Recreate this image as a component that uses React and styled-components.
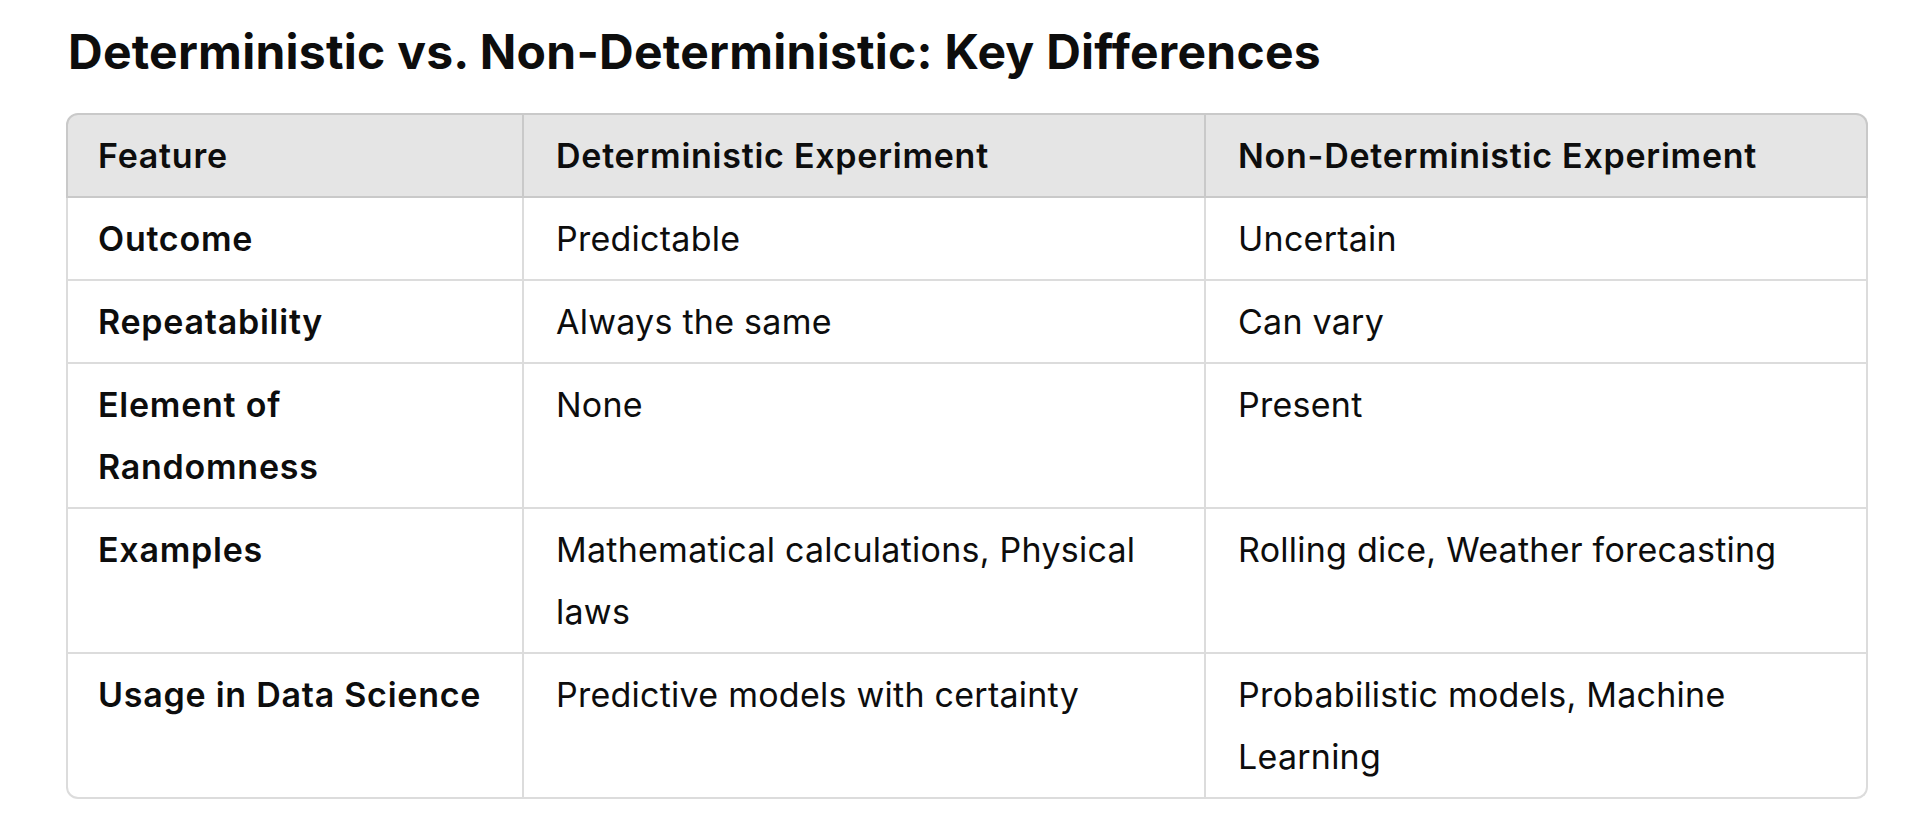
import React from "react";
import styled, { createGlobalStyle } from "styled-components";

const GlobalStyle = createGlobalStyle`
    html, body {
        margin: 0;
        padding: 0;
        background: #ffffff;
    }
    body {
        font-family: Inter, "Noto Sans", "Liberation Sans", sans-serif;
        color: #0d0d0d;
    }
`;

const Page = styled.div`
    padding: 22px 38px 30px 66px;
`;

const Heading = styled.h3`
    margin: 0 0 31px 2px;
    font-size: 48px;
    line-height: 60px;
    font-weight: 700;
    letter-spacing: 0.25px;
`;

const Table = styled.table`
    width: 1802px;
    border-collapse: separate;
    border-spacing: 0;
    table-layout: fixed;
`;

const HeadCell = styled.th`
    background: #e5e5e5;
    border-top: 2px solid #c9c9c9;
    border-right: 2px solid #c9c9c9;
    border-bottom: 2px solid #c9c9c9;
    padding: 10px 30px 9px 32px;
    text-align: left;
    font-size: 34px;
    line-height: 62px;
    font-weight: 600;
    letter-spacing: 0.75px;

    &:first-child {
        border-left: 2px solid #c9c9c9;
        border-top-left-radius: 12px;
        padding-left: 30px;
    }
    &:last-child {
        border-top-right-radius: 12px;
    }
`;

const Cell = styled.td`
    border-right: 2px solid #dcdcdc;
    border-bottom: 2px solid #dcdcdc;
    padding: 10px 30px 9px 32px;
    vertical-align: top;
    font-size: 34px;
    line-height: 62px;
    font-weight: ${(p) => (p.$label ? 600 : 400)};
    letter-spacing: ${(p) => (p.$label ? "0.75px" : "0.25px")};

    &:first-child {
        border-left: 2px solid #dcdcdc;
        padding-left: 30px;
    }
    tr:last-child > &:first-child {
        border-bottom-left-radius: 12px;
    }
    tr:last-child > &:last-child {
        border-bottom-right-radius: 12px;
    }
`;

const columns = [
    { title: "Feature", width: 458 },
    { title: "Deterministic Experiment", width: 682 },
    { title: "Non-Deterministic Experiment", width: 662 },
];

const rows = [
    ["Outcome", "Predictable", "Uncertain"],
    ["Repeatability", "Always the same", "Can vary"],
    ["Element of Randomness", "None", "Present"],
    ["Examples", "Mathematical calculations, Physical laws", "Rolling dice, Weather forecasting"],
    ["Usage in Data Science", "Predictive models with certainty", "Probabilistic models, Machine Learning"],
];

const App = () => {
    return (
        <Page>
            <GlobalStyle />
            <Heading>Deterministic vs. Non-Deterministic: Key Differences</Heading>
            <Table>
                <colgroup>
                    {columns.map((c) => (
                        <col key={c.title} width={c.width} />
                    ))}
                </colgroup>
                <thead>
                    <tr>
                        {columns.map((c) => (
                            <HeadCell key={c.title}>{c.title}</HeadCell>
                        ))}
                    </tr>
                </thead>
                <tbody>
                    {rows.map((r) => (
                        <tr key={r[0]}>
                            {r.map((text, i) => (
                                <Cell key={i} $label={i === 0}>
                                    {text}
                                </Cell>
                            ))}
                        </tr>
                    ))}
                </tbody>
            </Table>
        </Page>
    );
};

export default App;
